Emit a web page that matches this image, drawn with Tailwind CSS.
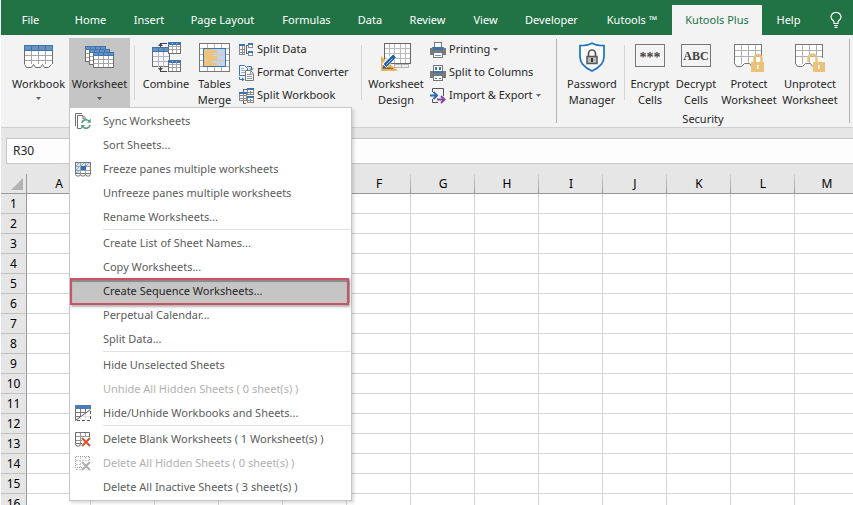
<!DOCTYPE html>
<html lang="en">
<head>
  <meta charset="UTF-8">
  <title>Kutools Plus</title>
  <script src="https://cdn.jsdelivr.net/npm/@tailwindcss/browser@4"></script>
</head>
<body class="flex h-screen flex-col overflow-hidden bg-white pl-px font-['Noto_Sans','Open_Sans',sans-serif] text-[11px] text-[#262626]">

  <!-- tabs -->
  <nav class="flex h-[35px] shrink-0 items-end bg-[#217346] text-white">
    <button class="h-[30px] w-[59px]">File</button>
    <button class="h-[30px] w-[61px]">Home</button>
    <button class="h-[30px] w-[56px]">Insert</button>
    <button class="h-[30px] w-[91px]">Page Layout</button>
    <button class="h-[30px] w-[77px]">Formulas</button>
    <button class="h-[30px] w-[50px]">Data</button>
    <button class="h-[30px] w-[65px]">Review</button>
    <button class="h-[30px] w-[51px]">View</button>
    <button class="h-[30px] w-[81px]">Developer</button>
    <button class="h-[30px] w-[80px]">Kutools ™</button>
    <button class="h-[30px] w-[90px] bg-[#f3f3f3] text-[#217346]">Kutools Plus</button>
    <button class="h-[30px] w-[53px]">Help</button>
    <button class="flex h-[30px] w-[38px] items-center justify-center pl-1" aria-label="Tell me">
      <svg class="h-4 w-3" viewBox="0 0 12 16" fill="none" stroke="#fff" stroke-width="1.2">
        <path d="M4 11.5V10C4 8.500 1 7.800 1 5a5 4.600 0 0 1 10 0C11 7.800 8 8.500 8 10v1.500zM4 13.500h4M4.500 15.300h3"/>
      </svg>
    </button>
  </nav>

  <!-- ribbon -->
  <div class="flex h-[93px] shrink-0 items-start border-b border-[#d0d0d0] bg-[#f3f3f3] pt-[3px] pl-[7px]">
    <button class="flex w-[61px] flex-col items-center pt-1 leading-4">
      <svg class="mb-[2px] h-8 w-[31px]" viewBox="0 0 31 32" fill="none" shape-rendering="crispEdges">
        <path d="M1 3h29v21H1z" fill="#fff"/>
        <path d="M1.500 8v13.500M8.500 8v14M15.500 8v14M22.500 8v14M29.500 8v13.500M1 13.500h29M1 18.500h29" stroke="#a6a6a6"/>
        <path d="M1.500 8v14M29.500 8v14" stroke="#6e6e6e"/>
        <path d="M1.500 3.500h28v5h-28z" fill="#6b91bd" stroke="#3c74b4"/>
        <path d="M8.500 4v4M15.500 4v4M22.500 4v4" stroke="#3c74b4"/>
        <path d="M1.500 22.500l2 3h5l2-3 2 3h5l2-3 2 3h4l3-3" stroke="#6e6e6e" shape-rendering="auto"/>
      </svg>
      Workbook
      <svg class="mt-[5px] h-[3px] w-[5px]" viewBox="0 0 5 3" fill="#666"><path d="M0 0h5L2.500 3z"/></svg>
    </button>

    <div class="relative">
      <button class="flex h-[69px] w-[61px] flex-col items-center bg-[#c5c5c5] pt-1 leading-4">
        <svg class="mb-[2px] h-8 w-[31px]" viewBox="0 0 31 32" fill="none" shape-rendering="crispEdges">
          <g id="sheet">
            <path d="M1.500 4.500h20v15h-20z" fill="#fff" stroke="#6e6e6e"/>
            <path d="M6.500 8v11M11.500 8v11M16.500 8v11M2 11.500h19M2 15.500h19" stroke="#a6a6a6"/>
            <path d="M1.500 4.500h20v3h-20z" fill="#6b91bd" stroke="#3c74b4"/>
            <path d="M6.500 5v3M11.500 5v3M16.500 5v3" stroke="#3c74b4"/>
          </g>
          <use href="#sheet" x="4" y="3"/>
          <use href="#sheet" x="8" y="6"/>
        </svg>
        Worksheet
        <svg class="mt-[5px] h-[3px] w-[5px]" viewBox="0 0 5 3" fill="#555"><path d="M0 0h5L2.500 3z"/></svg>
      </button>

      <!-- worksheet menu -->
      <div role="menu" class="absolute top-full left-0 z-10 flex w-[283px] flex-col border border-[#c6c6c6] bg-white py-px text-[#5c5c5c] shadow-[2px_2px_3px_rgba(0,0,0,0.15)]">
        <button role="menuitem" class="flex h-6 items-center pl-[5px]">
          <span class="w-7">
            <svg class="h-4 w-4" viewBox="0 0 16 16" fill="none">
              <path d="M.5 13V.5H7M2.500 15.500V2.500H8l3 3M2.500 15.500H6M8 3v3h3" stroke="#6e6e6e"/>
              <path d="M6.800 10a4.300 4.300 0 0 1 7.600-1.500M15.200 12a4.300 4.300 0 0 1-7.600 1.500" stroke="#5aa183" stroke-width="1.700"/>
              <path d="M15.800 5.800v4h-4zM6.200 16v-4h4z" fill="#5aa183"/>
            </svg>
          </span>Sync Worksheets
        </button>
        <button role="menuitem" class="flex h-6 items-center pl-[33px]">Sort Sheets...</button>
        <button role="menuitem" class="flex h-6 items-center pl-[5px]">
          <span class="w-7">
            <svg class="h-4 w-4" viewBox="0 0 16 16" fill="none" shape-rendering="crispEdges">
              <path d="M.5 1.500h15v11H.5z" fill="#fff" stroke="#777"/>
              <path d="M1 2h14v3H1zM1 5h4v7H1z" fill="#dbe4f0"/>
              <path d="M5.500 2v11M10.500 2v11M1 5.500h14M1 9.500h14" stroke="#a0a0a0"/>
              <path d="M6 5h5v4H6z" fill="#2f6fb5"/>
              <path d="M1 5l3-3M6 5l3-3M11 5l3-3M1 9l4-4M1 12l4-3" stroke="#8fb0d8" shape-rendering="auto"/>
              <path d="M.5 13l1 2h3l1-2 1 2h3l1-2 1 2h3l1-2" stroke="#777" shape-rendering="auto"/>
            </svg>
          </span>Freeze panes multiple worksheets
        </button>
        <button role="menuitem" class="flex h-6 items-center pl-[33px]">Unfreeze panes multiple worksheets</button>
        <button role="menuitem" class="flex h-6 items-center pl-[33px]">Rename Worksheets...</button>
        <hr class="mb-px ml-[33px] border-[#e1e1e1]">
        <button role="menuitem" class="flex h-6 items-center pl-[33px]">Create List of Sheet Names...</button>
        <button role="menuitem" class="flex h-6 items-center pl-[33px]">Copy Worksheets...</button>
        <button role="menuitem" class="relative mx-px flex h-6 items-center bg-[#c5c5c5] pl-8 text-[#262626]">
          Create Sequence Worksheets...
          <span class="absolute -top-px right-px -bottom-[2px] -left-px border-2 border-[#cc5365] shadow-[1px_2px_2px_rgba(0,0,0,0.3),inset_0_2px_1px_rgba(0,0,0,0.3)]"></span>
        </button>
        <button role="menuitem" class="flex h-6 items-center pl-[33px]">Perpetual Calendar...</button>
        <button role="menuitem" class="flex h-6 items-center pl-[33px]">Split Data...</button>
        <hr class="mb-px ml-[33px] border-[#e1e1e1]">
        <button role="menuitem" class="flex h-6 items-center pl-[33px]">Hide Unselected Sheets</button>
        <button role="menuitem" disabled class="flex h-6 items-center pl-[33px] text-[#b1b1b1]">Unhide All Hidden Sheets ( 0 sheet(s) )</button>
        <button role="menuitem" class="flex h-6 items-center pl-[5px]">
          <span class="w-7">
            <svg class="h-4 w-4" viewBox="0 0 16 16" fill="none">
              <path d="M0 0h16v4H0z" fill="#4a7db8"/>
              <path d="M5.500 4v7M10.500 4v4M.5 4v11.500M0 7.500h11M0 11.500h6" stroke="#777"/>
              <path d="M.5 15.500L15.500 4.500" stroke="#555"/>
              <path d="M2 15.500h14M15.500 6v10" stroke="#555" stroke-dasharray="3 2"/>
              <path d="M5.500 12v3M10.500 9v6M8 11.500h7" stroke="#ddd"/>
            </svg>
          </span>Hide/Unhide Workbooks and Sheets...
        </button>
        <hr class="mb-px ml-[33px] border-[#e1e1e1]">
        <button role="menuitem" class="flex h-6 items-center pl-[5px]">
          <span class="w-7">
            <svg class="h-4 w-4" viewBox="0 0 16 16" fill="none">
              <path d="M7 12.500H.5V1.500h14V6" stroke="#6e6e6e"/>
              <path d="M5.500 2v10M10.500 2v4M1 5.500h13M1 9.500h6" stroke="#999"/>
              <path d="M.5 13l1 2h3l1-2" stroke="#6e6e6e"/>
              <path d="M7 7l8 8M15 7l-8 8" stroke="#d9512c" stroke-width="2"/>
            </svg>
          </span>Delete Blank Worksheets ( 1 Worksheet(s) )
        </button>
        <button role="menuitem" disabled class="flex h-6 items-center pl-[5px] text-[#b1b1b1]">
          <span class="w-7">
            <svg class="h-4 w-4" viewBox="0 0 16 16" fill="none">
              <path d="M7 12.500H.5V1.500h14V6" stroke="#999" stroke-dasharray="1 1"/>
              <path d="M5.500 2v10M10.500 2v4M1 5.500h13M1 9.500h6M1 14.500h5" stroke="#c8c8c8" stroke-dasharray="2 1"/>
              <path d="M7 7l8 8M15 7l-8 8" stroke="#b0adb0" stroke-width="2"/>
            </svg>
          </span>Delete All Hidden Sheets ( 0 sheet(s) )
        </button>
        <button role="menuitem" class="flex h-6 items-center pl-[33px]">Delete All Inactive Sheets ( 3 sheet(s) )</button>
      </div>
    </div>

    <div class="mx-1 mt-[7px] h-[55px] w-px bg-[#d4d4d4]"></div>

    <button class="flex w-[54px] flex-col items-center pt-1 leading-4">
      <svg class="mb-[2px] h-8 w-8" viewBox="0 0 32 32" fill="none" shape-rendering="crispEdges">
        <path d="M2.500 5.500h17v19h-17z" fill="#f6f6fc" stroke="#6e6e6e"/>
        <path d="M8.500 9v16M13.500 9v16M3 14.500h16M3 19.500h16" stroke="#b5b5c0"/>
        <path d="M2.500 5.500h17v4h-17z" fill="#6b91bd" stroke="#3c74b4"/>
        <path d="M8.500 6v3M13.500 6v3" stroke="#3c74b4"/>
        <g id="mini">
          <path d="M18.500.500h12v11h-12z" fill="#fff" stroke="#6e6e6e"/>
          <path d="M22.500 3v8M26.500 3v8M19 4.500h11M19 7.500h11" stroke="#a6a6a6"/>
          <path d="M18 0h13v3H18z" fill="#3c74b4"/>
          <path d="M22.500 1v1M26.500 1v1" stroke="#9db9d8"/>
        </g>
        <use href="#mini" y="18"/>
        <path d="M10.500 5V1.500H17M10.500 25v4.500H17" stroke="#444"/>
        <path d="M8 4h5l-2.500-3zM8 26h5l-2.500 3z" fill="#444" shape-rendering="auto"/>
      </svg>
      Combine
    </button>
    <button class="ml-[2px] flex w-[39px] flex-col items-center pt-1 leading-4">
      <svg class="mb-[2px] h-8 w-[31px]" viewBox="0 0 31 32" fill="none" shape-rendering="crispEdges">
        <path d="M.5 1.500h30v28H.5z" fill="#fff" stroke="#777"/>
        <path d="M8.500 2v27M15.500 2v27M22.500 2v27M1 6.500h29M1 12.500h29M1 18.500h29M1 24.500h29" stroke="#b0b0b0"/>
        <path d="M4 6h23v19H4z" fill="#c2d3ea"/>
        <path d="M4 6h9v2h5v3h-4v3h4v4h-5v3h5v4H4z" fill="#efc478"/>
        <path d="M5 12.500h22M5 18.500h22" stroke="#d8c8a4"/>
        <path d="M4.500 6.500h22v18h-22z" stroke="#3c74b4"/>
      </svg>
      Tables<br>Merge
    </button>

    <div class="ml-[5px] w-[122px]">
      <button class="flex h-[23px] items-center gap-[2px] whitespace-nowrap">
        <svg class="h-4 w-4" viewBox="0 0 16 16" fill="none" shape-rendering="crispEdges">
          <path d="M.500 3.500h5v9h-5zM3.500 4v8M1 7.500h5M1 10.500h5" stroke="#8a8a8a" fill="#fff"/>
          <path d="M9.500 1.500h4v4h-4zM9.500 9.500h4v4h-4z" fill="#fff" stroke="#8a8a8a"/>
          <path d="M0 2h6v2H0zM9 1h5v2H9zM9 9h5v2H9z" fill="#3c74b4"/>
          <path d="M7.500 3v9M7 3.500h2M7 11.500h2" stroke="#666"/>
        </svg>Split Data
      </button>
      <button class="flex h-[23px] items-center gap-[2px] whitespace-nowrap">
        <svg class="h-4 w-4" viewBox="0 0 16 16" fill="none">
          <path d="M.500.500h5l3 3v7h-8z" fill="#fff" stroke="#3c74b4"/>
          <path d="M2 3.500h3M2 5.500h4M2 7.500h4" stroke="#8eb0d6"/>
          <path d="M6.500 5.500h5l3 3v7h-8z" fill="#fff" stroke="#777"/>
          <path d="M8 9.500h5M8 11.500h5M8 13.500h5M11.500 6v3h3" stroke="#999"/>
          <path d="M8 1.500h4.500V4M.500 12v2.500H4" stroke="#3c74b4"/>
          <path d="M10 3.500h5l-2.500 2zM3 12.500v4l2.500-2z" fill="#3c74b4"/>
        </svg>Format Converter
      </button>
      <button class="flex h-[23px] items-center gap-[2px] whitespace-nowrap">
        <svg class="h-4 w-4" viewBox="0 0 16 16" fill="none" shape-rendering="crispEdges">
          <path d="M.500 4.500h7v8h-7zM4 5v8M1 7.500h7M1 10.500h7" fill="#fff" stroke="#8a8a8a"/>
          <path d="M8.500 1.500h6v5h-6zM8.500 9.500h6v5h-6zM11.500 3v4M11.500 11v4M9 4.500h6M9 12.500h6" fill="#fff" stroke="#8a8a8a"/>
          <path d="M0 4h8v2H0zM8 0h7v2H8zM8 8h7v2H8z" fill="#3c74b4"/>
          <path d="M4.500 4V1.500H8M4.500 13v2.500H7" stroke="#666"/>
        </svg>Split Workbook
      </button>
    </div>

    <div class="mt-[7px] mr-1 h-[55px] w-px bg-[#d4d4d4]"></div>

    <button class="flex w-[60px] flex-col items-center pt-1 leading-4">
      <svg class="mb-[2px] h-8 w-8" viewBox="0 0 32 32" fill="none">
        <g shape-rendering="crispEdges">
          <path d="M4.500 1.500h26v20h-26z" fill="#fff" stroke="#666"/>
          <path d="M9.500 2v19M14.500 2v19M20.500 2v19M25.500 2v19M5 6.500h25M5 11.500h25M5 16.500h25" stroke="#bbb"/>
          <path d="M14.500 22.500h14v3h-14zM21.500 23v2" fill="#eee" stroke="#b5b5b5"/>
        </g>
        <path d="M1 14v15h17z" fill="#e9b25f"/>
        <path d="M5 26.500h8M6 25v2M8 25v2M10 25v2" stroke="#8a6327"/>
        <path d="M4 24L14.500 13.500" stroke="#fff" stroke-width="6"/>
        <path d="M5 23.500L14.500 14" stroke="#1f5fa8" stroke-width="4"/>
        <path d="M2.500 27l1-4 3 3z" fill="#1f5fa8"/>
        <path d="M6.500 22.500l6-6" stroke="#a8c4e4"/>
      </svg>
      Worksheet<br>Design
    </button>

    <div class="ml-1 w-[126px]">
      <button class="flex h-[23px] items-center gap-[3px] whitespace-nowrap">
        <svg class="h-4 w-4" viewBox="0 0 16 16" fill="none" shape-rendering="crispEdges">
          <path d="M4.500.500h7v5h-7z" fill="#fff" stroke="#777"/>
          <path d="M0 6h2v-1h12v1h2v7H0z" fill="#7a7a7a"/>
          <path d="M3 5h10v3H3z" fill="#3c74b4"/>
          <path d="M3.500 10.500h9v5h-9z" fill="#fff" stroke="#777"/>
          <path d="M5 13.500h6" stroke="#6b91bd"/>
        </svg>Printing
        <svg class="h-[3px] w-[5px]" viewBox="0 0 5 3" fill="#666"><path d="M0 0h5L2.500 3z"/></svg>
      </button>
      <button class="flex h-[23px] items-center gap-[3px] whitespace-nowrap">
        <svg class="h-4 w-4" viewBox="0 0 16 16" fill="none" shape-rendering="crispEdges">
          <path d="M3.500.500h9v6h-9z" fill="#fff" stroke="#777"/>
          <path d="M5 2h2v3H5zM9 2h2v3H9z" fill="#3c74b4"/>
          <path d="M0 6h16v7H0z" fill="#7a7a7a"/>
          <path d="M3 6h10v2H3z" fill="#3c74b4"/>
          <path d="M3.500 10.500h9v5h-9z" fill="#fff" stroke="#777"/>
          <path d="M5 13.500h2M9 13.500h2" stroke="#3c74b4"/>
        </svg>Split to Columns
      </button>
      <button class="flex h-[23px] items-center gap-[3px] whitespace-nowrap">
        <svg class="h-4 w-4" viewBox="0 0 16 16" fill="none">
          <path d="M2.500 4V.500h11V8M2.500 11v3.500H8" stroke="#555"/>
          <path d="M0 7.500h6M3.500 4l3.500 3.500L3.500 11" stroke="#2b6cb5" stroke-width="2"/>
          <path d="M7 11.500h7M11 8l3.500 3.500L11 15" stroke="#8448a5" stroke-width="2"/>
        </svg>Import &amp; Export
        <svg class="h-[3px] w-[5px]" viewBox="0 0 5 3" fill="#666"><path d="M0 0h5L2.500 3z"/></svg>
      </button>
    </div>

    <div class="mt-px h-[84px] w-px bg-[#b3b3b3]"></div>

    <div class="flex w-[292px] flex-col">
      <div class="flex h-[73px] pl-[5px]">
        <button class="flex w-[60px] flex-col items-center pt-1 leading-4">
          <svg class="mb-[2px] h-8 w-8" viewBox="0 0 32 32" fill="none">
            <path d="M16 1.300C12.500 3.200 8.500 3.700 4 3.700V15c0 6.500 4.500 10.500 12 14 7.500-3.500 12-7.500 12-14V3.700c-4.500 0-8.500-.5-12-2.400z" fill="#fafafa" stroke="#1e73be" stroke-width="1.700"/>
            <path d="M11 14.500h10v7H11z" fill="#bbb" stroke="#555" stroke-width="1.500"/>
            <path d="M12.500 14v-2.500a3.500 3.500 0 0 1 7 0V14" stroke="#555" stroke-width="1.700"/>
            <path d="M15 16h2v4h-2z" fill="#333"/>
          </svg>
          Password<br>Manager
        </button>
        <div class="mx-[2px] mt-[7px] h-[55px] w-px bg-[#d4d4d4]"></div>
        <button class="flex w-[46px] flex-col items-center pt-1 leading-4">
          <span class="mt-[2px] mb-[9px] flex h-[23px] w-[30px] items-center justify-center border border-[#777] font-['Liberation_Serif',serif] text-sm font-bold text-[#444]"><span class="pt-1">***</span></span>
          Encrypt<br>Cells
        </button>
        <button class="flex w-[46px] flex-col items-center pt-1 leading-4">
          <span class="mt-[2px] mb-[9px] flex h-[23px] w-[30px] items-center justify-center border border-[#777] font-['Liberation_Serif',serif] text-xs font-bold text-[#444]">ABC</span>
          Decrypt<br>Cells
        </button>
        <button class="flex w-[60px] flex-col items-center pt-1 leading-4">
          <svg class="mb-[2px] h-8 w-8" viewBox="0 0 32 32" fill="none">
            <g id="book" shape-rendering="crispEdges">
              <path d="M1.500 2.500h27v19h-27z" fill="#fff"/>
              <path d="M8.500 3v19M15.500 3v19M22.500 3v19M1 8.500h27M1 14.500h27" stroke="#b0b0b0"/>
              <path d="M1.500 22V2.500h27V16" stroke="#777"/>
              <path d="M1.500 21.500l2 3h5l3-3h5l2 3" stroke="#777" shape-rendering="auto"/>
            </g>
            <path d="M21.500 21v-4.500a3.500 3.500 0 0 1 7 0V21" stroke="#eac27a" stroke-width="2.500"/>
            <path d="M18 20h13v10H18z" fill="#eac27a"/>
            <path d="M24 23h1.500v4H24z" fill="#fff"/>
          </svg>
          Protect<br>Worksheet
        </button>
        <button class="ml-px flex w-[60px] flex-col items-center pt-1 leading-4">
          <svg class="mb-[2px] h-8 w-8" viewBox="0 0 32 32" fill="none">
            <use href="#book"/>
            <path d="M14.500 20v-3.500a4 4 0 0 1 8 0V21" stroke="#eac27a" stroke-width="2.500"/>
            <path d="M19 20h12v10H19z" fill="#eac27a"/>
            <path d="M24 23h1.500v4H24z" fill="#fff"/>
          </svg>
          Unprotect<br>Worksheet
        </button>
      </div>
      <div class="text-center leading-4">Security</div>
    </div>
    <div class="mt-px h-[84px] w-px bg-[#b3b3b3]"></div>
  </div>

  <!-- name box and formula bar -->
  <div class="flex h-[46px] shrink-0 gap-2 bg-[#e6e6e6] pt-[10px] pb-[10px] pl-[5px]">
    <input aria-label="Name box" value="R30" class="w-[104px] border border-[#c6c6c6] bg-[#fdfdfd] px-[6px] text-xs">
    <input aria-label="Formula bar" class="min-w-0 flex-1 border-y border-[#c6c6c6] bg-[#fdfdfd] px-[6px] text-xs">
  </div>

  <!-- sheet -->
  <div class="min-h-0 flex-1 overflow-hidden">
    <table class="w-max table-fixed border-separate border-spacing-0 text-xs leading-4 text-black">
      <thead><tr id="cols"></tr></thead>
      <tbody id="rows"></tbody>
    </table>
  </div>

  <script>
    // enough cells to fill the window
    const colCount = Math.min(26, Math.ceil((window.innerWidth - 27) / 64));
    const rowCount = Math.ceil((window.innerHeight - 194) / 20);
    const letters = 'ABCDEFGHIJKLMNOPQRSTUVWXYZ'.slice(0, colCount).split('');

    // column letters
    let head = '<th class="h-5 w-[26px] border-r border-b border-[#999] bg-[#e6e6e6] p-0"><svg class="ml-[10px] h-3 w-3" viewBox="0 0 12 12" fill="#b2b2b2"><path d="M12 0v12H0z"/></svg></th>';
    letters.forEach(l => {
      head += '<th class="h-5 w-16 border-b border-[#999] bg-[#e6e6e6] bg-linear-to-t from-[#999] to-[#d0d0d0] bg-[length:1px_100%] bg-right bg-no-repeat p-0 font-normal">' + l + '</th>';
    });
    document.getElementById('cols').innerHTML = head;

    // numbered rows of empty cells
    let body = '';
    for (let r = 1; r <= rowCount; r++) {
      body += '<tr><th class="h-5 border-r border-b border-r-[#999] border-b-[#c0c0c0] bg-[#e6e6e6] p-0 font-normal">' + r + '</th>';
      body += letters.map(() => '<td class="h-5 border-r border-b border-[#d4d4d4] p-0"></td>').join('') + '</tr>';
    }
    document.getElementById('rows').innerHTML = body;
  </script>
</body>
</html>
